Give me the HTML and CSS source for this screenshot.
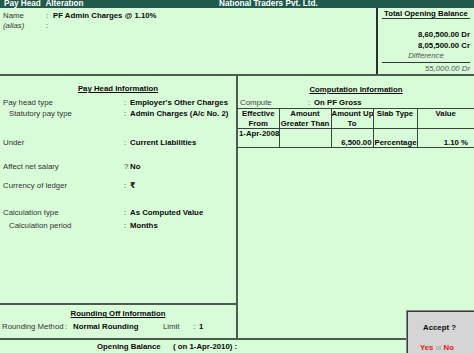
FILE: index.html
```html
<!DOCTYPE html>
<html>
<head>
<meta charset="utf-8">
<link rel="stylesheet" href="styles.css">
</head>
<body>
<div class="titlebar">
  <span class="tb-left">Pay Head&nbsp;&nbsp;Alteration</span>
  <span class="tb-company">National Traders Pvt. Ltd.</span>
</div>
<div class="top">
  <div class="namearea">
    <div class="nrow"><span class="nlabel">Name</span><span class="nsep">:</span><span class="val">PF Admin Charges @ 1.10%</span></div>
    <div class="nrow"><span class="nlabel alias">(alias)</span><span class="nsep">:</span></div>
  </div>
  <div class="balance">
    <div class="bal-head">Total Opening Balance</div>
    <div class="bal-amt first">8,60,500.00 Dr</div>
    <div class="bal-amt">8,05,500.00 Cr</div>
    <div class="bal-diff">Difference</div>
    <div class="bal-total">55,000.00 Dr</div>
  </div>
</div>
<div class="main">
  <div class="leftcol">
    <div class="info">
      <div class="sec-title t-info"><span>Pay Head Information</span></div>
      <div class="row m3"><span class="lbl">Pay head type</span><span class="sep">:</span><span class="val">Employer's Other Charges</span></div>
      <div class="row"><span class="lbl sub">Statutory pay type</span><span class="sep">:</span><span class="val">Admin Charges (A/c No. 2)</span></div>
      <div class="row m18"><span class="lbl">Under</span><span class="sep">:</span><span class="val">Current Liabilities</span></div>
      <div class="row m13"><span class="lbl">Affect net salary</span><span class="sep">?</span><span class="val">No</span></div>
      <div class="row m8"><span class="lbl">Currency of ledger</span><span class="sep">:</span><span class="val">₹</span></div>
      <div class="row m16"><span class="lbl">Calculation type</span><span class="sep">:</span><span class="val">As Computed Value</span></div>
      <div class="row m2"><span class="lbl sub">Calculation period</span><span class="sep">:</span><span class="val">Months</span></div>
    </div>
    <div class="rounding">
      <div class="sec-title t-round"><span>Rounding Off Information</span></div>
      <div class="row rrow">
        <span class="r-lbl">Rounding Method</span><span class="r-sep">:</span><span class="val r-val">Normal Rounding</span>
        <span class="r-lim">Limit</span><span class="sep">:</span><span class="val">1</span>
      </div>
    </div>
  </div>
  <div class="rightcol">
    <div class="sec-title t-comp"><span>Computation Information</span></div>
    <div class="row crow"><span class="c-lbl">Compute</span><span class="sep">:</span><span class="val">On PF Gross</span></div>
    <table class="slab">
      <colgroup><col class="w1"><col class="w2"><col class="w3"><col class="w4"><col class="w5"></colgroup>
      <thead>
        <tr><th>Effective<br>From</th><th>Amount<br>Greater Than</th><th>Amount Up<br>To</th><th>Slab Type</th><th>Value</th></tr>
      </thead>
      <tbody>
        <tr><td class="date">1-Apr-2008</td><td></td><td class="num">6,500.00</td><td class="txt">Percentage</td><td class="num pct">1.10 %</td></tr>
      </tbody>
    </table>
  </div>
</div>
<div class="footer">
  <span class="ob">Opening Balance</span><span class="ob-date">( on 1-Apr-2010) :</span>
</div>
<div class="accept">
  <div class="acc-q">Accept ?</div>
  <div class="acc-yn"><span class="yn">Yes</span> <span class="or">or</span> <span class="yn">No</span></div>
</div>
</body>
</html>
```
FILE: styles.css
```css
html, body {
  margin: 0;
  padding: 0;
}
body {
  width: 474px;
  height: 353px;
  overflow: hidden;
  position: relative;
  background: #d8fcd8;
  font-family: "Liberation Sans", Arial, "DejaVu Sans", sans-serif;
  font-size: 7.8px;
  color: #333;
}
.val {
  font-weight: bold;
  color: #0a0a0a;
}

/* title bar */
.titlebar {
  height: 8px;
  background: #215a4c;
  color: #fff;
  font-weight: bold;
  font-size: 8.2px;
  line-height: 8px;
  display: flex;
  white-space: nowrap;
}
.tb-left {
  width: 215px;
  padding-left: 4px;
}

/* top */
.top {
  display: flex;
  height: 66px;
  border-bottom: 2px solid #4c5c50;
}
.namearea {
  flex: 1;
  padding: 3px 0 0 3px;
}
.nrow {
  display: flex;
  line-height: 9.5px;
  height: 9.5px;
}
.nlabel {
  width: 43px;
}
.alias {
  font-style: italic;
}
.nsep {
  width: 7px;
}
.balance {
  width: 96px;
  border-left: 2px solid #2e2e2e;
  display: flex;
  flex-direction: column;
}
.bal-head {
  margin: 1px 4px 0 4px;
  line-height: 9px;
  border-bottom: 1px solid #333;
  text-align: center;
  font-weight: bold;
  color: #0a0a0a;
}
.bal-amt {
  line-height: 11px;
  text-align: right;
  padding-right: 4px;
  font-weight: bold;
  color: #0a0a0a;
}
.bal-amt.first {
  margin-top: 10px;
}
.bal-diff {
  margin: 0 4px;
  line-height: 10px;
  border-bottom: 1px solid #333;
  text-align: center;
  font-style: italic;
  color: #555;
  padding-bottom: 1px;
}
.bal-total {
  margin-top: 1px;
  line-height: 10px;
  text-align: right;
  padding-right: 4px;
  font-style: italic;
  color: #555;
}

/* main */
.main {
  display: flex;
  height: 262px;
}
.leftcol {
  width: 236px;
  border-right: 2px solid #4c5c50;
  display: flex;
  flex-direction: column;
}
.info {
  height: 227px;
}
.rounding {
  height: 35px;
  box-sizing: border-box;
  border-top: 2px solid #4c5c50;
}
.rightcol {
  flex: 1;
}
.sec-title {
  line-height: 11px;
  height: 11px;
  text-align: center;
  font-weight: bold;
  color: #0a0a0a;
}
.sec-title span {
  text-decoration: underline;
  text-underline-offset: 1px;
}
.t-info { margin-top: 7px; }
.t-round { margin-top: 3px; }
.t-comp { margin-top: 8px; }

.row {
  display: flex;
  height: 11px;
  line-height: 11px;
  white-space: nowrap;
}
.m2 { margin-top: 2px; }
.m3 { margin-top: 3px; }
.m8 { margin-top: 8px; }
.m13 { margin-top: 13px; }
.m16 { margin-top: 16px; }
.m18 { margin-top: 18px; }
.lbl {
  width: 121px;
  padding-left: 3px;
}
.lbl.sub {
  width: 115px;
  padding-left: 9px;
}
.sep {
  width: 6px;
}
.rrow {
  margin-top: 1.5px;
}
.r-lbl {
  width: 63px;
  padding-left: 2px;
}
.r-sep {
  width: 8px;
}
.r-val {
  width: 90px;
}
.r-lim {
  width: 30px;
}
.crow {
  margin-top: 2px;
}
.c-lbl {
  width: 68px;
  padding-left: 2px;
  color: #444;
}

/* table */
.slab {
  width: 236px;
  border-collapse: collapse;
  table-layout: fixed;
  font-weight: bold;
  color: #0a0a0a;
}
.w1 { width: 41px; }
.w2 { width: 52px; }
.w3 { width: 42px; }
.w4 { width: 44px; }
.w5 { width: 57px; }
.slab th, .slab td {
  padding: 0;
  border: 1px solid #3a443d;
  line-height: 9.5px;
  white-space: nowrap;
  overflow: hidden;
}
.slab th:first-child, .slab td:first-child {
  border-left: none;
}
.slab th:last-child, .slab td:last-child {
  border-right: none;
}
.slab th {
  height: 19px;
  text-align: center;
  vertical-align: top;
  font-weight: bold;
}
.slab td {
  height: 18px;
  vertical-align: bottom;
}
.slab td.date {
  vertical-align: top;
  padding-left: 1px;
}
.slab td.num {
  text-align: right;
  padding-right: 1px;
}
.slab td.pct {
  padding-right: 6px;
}
.slab td.txt {
  padding-left: 1px;
}

/* footer */
.footer {
  border-top: 2px solid #4c5c50;
  height: 13px;
  line-height: 13px;
  font-weight: bold;
  color: #0a0a0a;
  padding-left: 97px;
  white-space: nowrap;
}
.ob {
  display: inline-block;
  width: 76px;
}

/* accept dialog */
.accept {
  position: absolute;
  left: 407px;
  top: 311px;
  width: 67px;
  height: 44px;
  background: #d5d5d5;
  border-left: 1px solid #3a3a3a;
  border-top: 1px solid #3a3a3a;
  box-shadow: -1px -1px 0 #8a8a8a;
}
.acc-q {
  margin-top: 11px;
  line-height: 10px;
  font-weight: bold;
  color: #0a0a0a;
  padding-left: 15px;
}
.acc-yn {
  margin-top: 10px;
  line-height: 10px;
  padding-left: 12px;
  white-space: nowrap;
}
.yn {
  color: #e01b1b;
  font-weight: bold;
}
.or {
  color: #9a9a9a;
  font-size: 6.5px;
}
```
